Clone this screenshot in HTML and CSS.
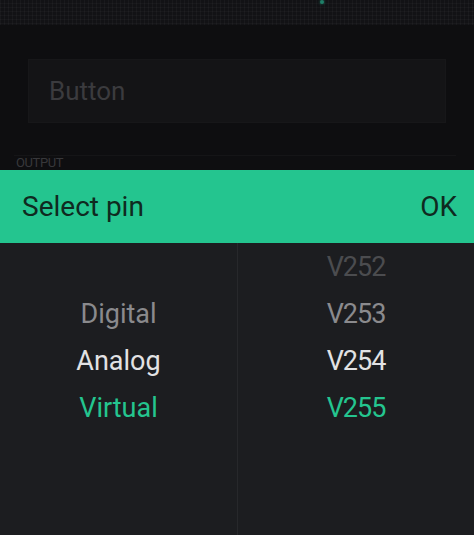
FILE: index.html
```html
<!DOCTYPE html>
<html>
<head>
<meta charset="utf-8">
<link rel="stylesheet" href="styles.css">
</head>
<body>
<div class="screen">
  <div class="grid"><span class="dot"></span></div>
  <div class="editor">
    <div class="field">Button</div>
  </div>
  <div class="label-row"><span class="label">OUTPUT</span></div>
  <div class="bar">
    <span class="title">Select pin</span>
    <span class="ok">OK</span>
  </div>
  <div class="picker">
    <div class="col col-left">
      <div class="row"></div>
      <div class="row dim">Digital</div>
      <div class="row bright">Analog</div>
      <div class="row accent">Virtual</div>
    </div>
    <div class="col col-right">
      <div class="row pin faded">V252</div>
      <div class="row pin dim">V253</div>
      <div class="row pin bright">V254</div>
      <div class="row pin accent">V255</div>
    </div>
  </div>
</div>
</body>
</html>
```

FILE: styles.css
```css
html, body {
  margin: 0;
  padding: 0;
  background: #0e0e10;
}
body {
  font-family: Roboto, "Liberation Sans", sans-serif;
}
.screen {
  width: 474px;
  height: 535px;
  overflow: hidden;
  display: flex;
  flex-direction: column;
}
.grid {
  height: 25px;
  flex: none;
  position: relative;
  background-color: #121215;
  background-image:
    linear-gradient(90deg, rgba(255,255,255,0.03) 1px, transparent 1px),
    linear-gradient(0deg, rgba(255,255,255,0.025) 1px, transparent 1px);
  background-size: 4px 4px;
}
.dot {
  position: absolute;
  left: 320px;
  top: 0;
  width: 4px;
  height: 4px;
  border-radius: 50%;
  background: #1f7f68;
  box-shadow: 0 0 3px #1a6b58;
}
.editor {
  flex: none;
  padding: 34px 28px 0;
}
.field {
  height: 64px;
  box-sizing: border-box;
  background: #141416;
  border: 1px solid #171719;
  display: flex;
  align-items: center;
  padding-left: 20px;
  font-size: 26px;
  color: #3b3b3e;
}
.label-row {
  flex: none;
  margin: 32px 18px 0 14px;
  height: 15px;
  border-top: 1px solid #151517;
  box-sizing: border-box;
}
.label {
  display: block;
  padding-left: 2px;
  font-size: 13px;
  line-height: 14px;
  letter-spacing: -0.4px;
  color: #38383b;
}
.bar {
  flex: none;
  height: 73px;
  background: #24c58f;
  display: flex;
  align-items: center;
  justify-content: space-between;
  padding: 0 17px 0 22px;
  font-size: 28px;
  color: #0f2a20;
}
.picker {
  flex: 1;
  display: flex;
  background: #1c1d20;
}
.col {
  display: flex;
  flex-direction: column;
}
.col-left {
  width: 237px;
  border-right: 1px solid #27282b;
}
.col-right {
  flex: 1;
}
.row {
  height: 47px;
  display: flex;
  align-items: center;
  justify-content: center;
  font-size: 27px;
}
.pin {
  letter-spacing: -1px;
}
.faded { color: #4b4c4f; }
.dim { color: #8a8a8d; }
.bright { color: #e2e2e4; }
.accent { color: #24c58f; }
```
